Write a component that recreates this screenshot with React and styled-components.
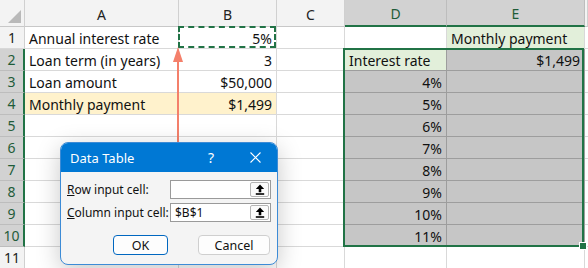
import styled, { createGlobalStyle } from "styled-components";

const GlobalStyle = createGlobalStyle`
  html, body { margin: 0; padding: 0; background: #ffffff; }
  body { font-family: "Noto Sans", "Open Sans", sans-serif; }
`;

const COLS = [25, 154, 98, 68, 102, 138, 3];
const ROW_H = 22;

const Page = styled.div`
  position: relative;
  width: 588px;
  height: 268px;
  overflow: hidden;
  background: #ffffff;
`;

const Sheet = styled.div`
  display: grid;
  grid-template-columns: ${COLS.map((c) => c + "px").join(" ")};
  grid-template-rows: 27px repeat(11, ${ROW_H}px);
  font-size: 14px;
  color: #111;
`;

const Corner = styled.div`
  position: relative;
  background: #f3f3f3;
  border-right: 1px solid #d0d0d0;
  border-bottom: 1px solid #c8c8c8;
  &::after {
    content: "";
    position: absolute;
    right: 3px;
    bottom: 3px;
    border-left: 13px solid transparent;
    border-bottom: 13px solid #b9b9b9;
  }
`;

const ColHead = styled.div`
  display: flex;
  align-items: center;
  justify-content: center;
  padding-top: 2px;
  font-size: 14px;
  background: ${(p) => (p.$sel ? "#d2d2d2" : "#f3f3f3")};
  color: ${(p) => (p.$sel ? "#1f5c39" : "#222")};
  border-right: 1px solid ${(p) => (p.$sel ? "#bdbdbd" : "#d0d0d0")};
  border-bottom: ${(p) => (p.$sel ? "2px solid #217346" : "1px solid #c8c8c8")};
  box-sizing: border-box;
`;

const RowHead = styled.div`
  display: flex;
  align-items: center;
  justify-content: center;
  font-size: 14px;
  background: ${(p) => (p.$sel ? "#d2d2d2" : "#f3f3f3")};
  color: ${(p) => (p.$sel ? "#1f5c39" : "#222")};
  border-bottom: 1px solid ${(p) => (p.$sel ? "#bdbdbd" : "#d8d8d8")};
  border-right: ${(p) => (p.$sel ? "2px solid #217346" : "1px solid #d0d0d0")};
  box-sizing: border-box;
`;

const Cell = styled.div`
  display: flex;
  align-items: center;
  justify-content: ${(p) => (p.$right ? "flex-end" : "flex-start")};
  padding: 1px 4px 0;
  white-space: nowrap;
  overflow: visible;
  box-sizing: border-box;
  background: ${(p) => p.$bg || "#ffffff"};
  border-right: 1px solid ${(p) => p.$line || "#d9d9d9"};
  border-bottom: 1px solid ${(p) => p.$line || "#d9d9d9"};
`;

const Marquee = styled.div`
  position: absolute;
  left: 178px;
  top: 26px;
  width: 98px;
  height: 22px;
  box-sizing: border-box;
  border: 2px dashed #217346;
`;

const Selection = styled.div`
  position: absolute;
  left: 343px;
  top: 48px;
  width: 241px;
  height: 199px;
  box-sizing: border-box;
  border: 2px solid #217346;
  &::after {
    content: "";
    position: absolute;
    right: -5px;
    bottom: -5px;
    width: 6px;
    height: 6px;
    background: #217346;
    border: 1px solid #ffffff;
  }
`;

const Arrow = styled.svg`
  position: absolute;
  left: 170px;
  top: 46px;
`;

const Dialog = styled.div`
  position: absolute;
  left: 60px;
  top: 142px;
  width: 218px;
  height: 123px;
  box-sizing: border-box;
  border: 1px solid #3c8bd6;
  border-radius: 8px;
  overflow: hidden;
  background: #f4f4f4;
  box-shadow: 0 6px 24px rgba(0, 0, 0, 0.22);
  font-family: "Noto Sans", "Open Sans", sans-serif;
  display: flex;
  flex-direction: column;
`;

const TitleBar = styled.div`
  height: 29px;
  flex: none;
  background: #0078d4;
  color: #ffffff;
  display: flex;
  align-items: center;
  padding: 0 0 0 9px;
  font-size: 13px;
`;

const TitleText = styled.span`
  flex: 1;
`;

const TitleButton = styled.span`
  width: 44px;
  text-align: center;
  font-size: 14px;
  display: flex;
  justify-content: center;
`;

const Body = styled.div`
  display: flex;
  flex-direction: column;
  padding: 8px 6px 0 6px;
  gap: 4px;
`;

const FieldRow = styled.div`
  display: flex;
  align-items: center;
  font-size: 12px;
  color: #111;
`;

const Label = styled.span`
  flex: none;
  width: 103px;
  white-space: nowrap;
`;

const Input = styled.div`
  width: 101px;
  height: 19px;
  box-sizing: border-box;
  border: 1px solid #9a9a9a;
  background: #ffffff;
  display: flex;
  align-items: center;
  justify-content: space-between;
  padding-left: 4px;
  font-size: 12px;
`;

const PickButton = styled.div`
  width: 19px;
  height: 15px;
  margin-right: 1px;
  box-sizing: border-box;
  border: 1px solid #b5b5b5;
  border-radius: 2px;
  background: #fbfbfb;
  display: flex;
  align-items: center;
  justify-content: center;
`;

const ButtonRow = styled.div`
  display: flex;
  justify-content: flex-end;
  gap: 30px;
  padding: 9px 1px 0 0;
`;

const Button = styled.div`
  width: ${(p) => (p.$w ? p.$w + "px" : "55px")};
  height: 20px;
  box-sizing: border-box;
  border: 1px solid ${(p) => (p.$primary ? "#0067c0" : "#cfcfcf")};
  border-radius: 4px;
  background: #fdfdfd;
  display: flex;
  align-items: center;
  justify-content: center;
  font-size: 12.5px;
  color: #111;
`;

const UpIcon = () => (
  <svg width="10" height="11" viewBox="0 0 10 11">
    <path d="M5 0.5 L9.2 5 H6.3 V8.3 H3.7 V5 H0.8 Z" fill="#000" />
    <rect x="0.8" y="9.2" width="8.4" height="1.6" fill="#000" />
  </svg>
);

const cols = ["A", "B", "C", "D", "E"];

const leftData = {
  1: ["Annual interest rate", "5%"],
  2: ["Loan term (in years)", "3"],
  3: ["Loan amount", "$50,000"],
  4: ["Monthly payment", "$1,499"],
};

const rates = { 3: "4%", 4: "5%", 5: "6%", 6: "7%", 7: "8%", 8: "9%", 9: "10%", 10: "11%" };

const SEL_BG = "#c6c6c6";
const SEL_LINE = "#9d9d9d";
const GREEN_BG = "#e2efda";
const ORANGE_BG = "#fff2cc";

function renderRow(r) {
  const sel = r >= 2 && r <= 10;
  const left = leftData[r] || ["", ""];
  const orange = r === 4 ? ORANGE_BG : undefined;

  let dProps = {};
  let eProps = {};
  let dText = "";
  let eText = "";

  if (r === 1) {
    eProps = { $bg: GREEN_BG };
    eText = "Monthly payment";
  } else if (r === 2) {
    dProps = { $bg: GREEN_BG, $line: SEL_LINE };
    dText = "Interest rate";
    eProps = { $bg: SEL_BG, $line: SEL_LINE, $right: true };
    eText = "$1,499";
  } else if (sel) {
    dProps = { $bg: SEL_BG, $line: SEL_LINE, $right: true };
    dText = rates[r];
    eProps = { $bg: SEL_BG, $line: SEL_LINE };
  }

  return [
    <RowHead key={`h${r}`} $sel={sel}>{r}</RowHead>,
    <Cell key={`a${r}`} $bg={orange}>{left[0]}</Cell>,
    <Cell key={`b${r}`} $bg={orange} $right>{left[1]}</Cell>,
    <Cell key={`c${r}`} />,
    <Cell key={`d${r}`} {...dProps}>{dText}</Cell>,
    <Cell key={`e${r}`} {...eProps}>{eText}</Cell>,
    <Cell key={`f${r}`} />,
  ];
}

export default function App() {
  return (
    <Page>
      <GlobalStyle />
      <Sheet>
        <Corner />
        {cols.map((c) => (
          <ColHead key={c} $sel={c === "D" || c === "E"}>{c}</ColHead>
        ))}
        <ColHead />
        {Array.from({ length: 11 }, (_, i) => renderRow(i + 1))}
      </Sheet>

      <Marquee />
      <Selection />

      <Arrow width="16" height="160" viewBox="0 0 16 160">
        <path d="M8 1 L13 16 H3 Z" fill="#f4806b" />
        <rect x="7" y="14" width="2" height="143" fill="#f4806b" />
      </Arrow>

      <Dialog>
        <TitleBar>
          <TitleText>Data Table</TitleText>
          <TitleButton>?</TitleButton>
          <TitleButton>
            <svg width="11" height="11" viewBox="0 0 11 11">
              <path d="M0.5 0.5 L10.5 10.5 M10.5 0.5 L0.5 10.5" stroke="#fff" strokeWidth="1.1" />
            </svg>
          </TitleButton>
        </TitleBar>
        <Body>
          <FieldRow>
            <Label><u>R</u>ow input cell:</Label>
            <Input>
              <span />
              <PickButton><UpIcon /></PickButton>
            </Input>
          </FieldRow>
          <FieldRow>
            <Label><u>C</u>olumn input cell:</Label>
            <Input>
              <span>$B$1</span>
              <PickButton><UpIcon /></PickButton>
            </Input>
          </FieldRow>
          <ButtonRow>
            <Button $primary>OK</Button>
            <Button $w={72}>Cancel</Button>
          </ButtonRow>
        </Body>
      </Dialog>
    </Page>
  );
}
